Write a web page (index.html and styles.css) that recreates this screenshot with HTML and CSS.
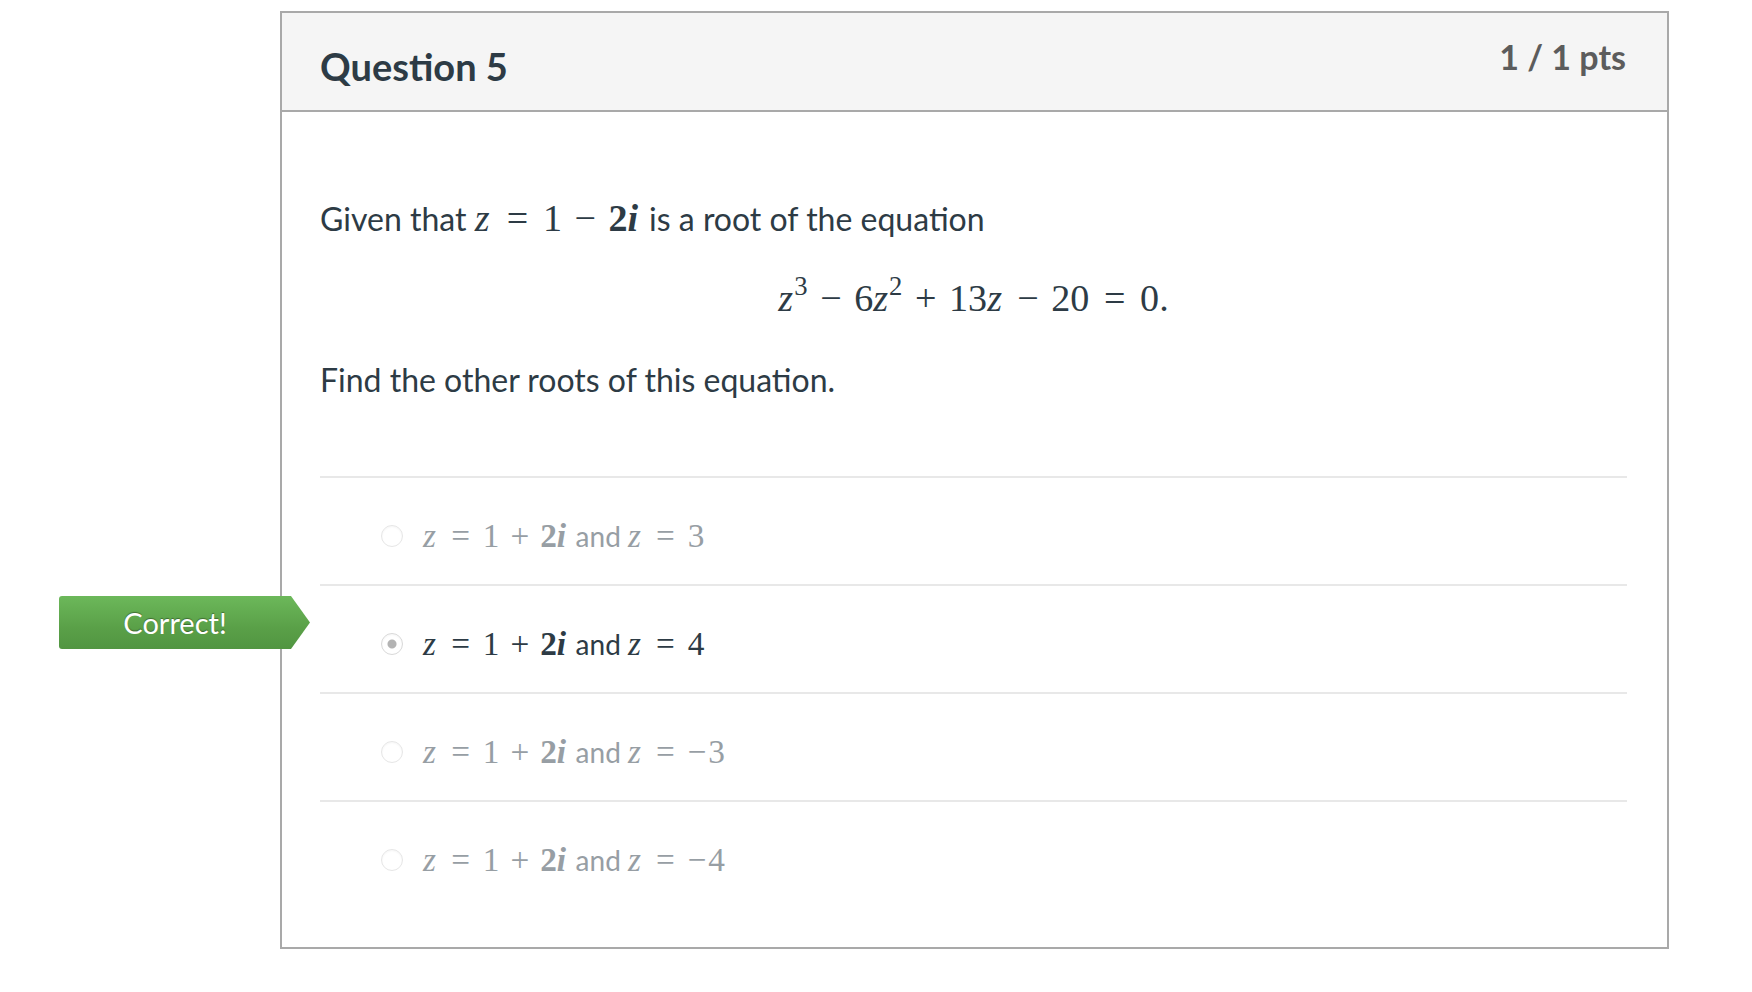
FILE: index.html
```html
<!DOCTYPE html>
<html lang="en">

<head>
    <meta charset="UTF-8">
    <meta name="viewport" content="width=device-width, initial-scale=1.0">
    <title>Question 5</title>
    <link rel="stylesheet" href="styles.css">
</head>

<body>
    <div class="question">
        <!-- Header -->
        <div class="question-header">
            <h2 class="question-title">Question 5</h2>
            <span class="points">1 / 1 pts</span>
        </div>

        <div class="question-body">
            <p class="question-text">Given that <span class="math"><i>z</i><span class="rel">=</span>1<span class="bin">−</span><b>2<i>i</i></b></span> is a root of the equation</p>

            <div class="math-display">
                <span class="math"><i>z</i><sup>3</sup><span class="bin">−</span>6<i>z</i><sup>2</sup><span class="bin">+</span>13<i>z</i><span class="bin">−</span>20<span class="rel">=</span>0.</span>
            </div>

            <p class="question-text">Find the other roots of this equation.</p>

            <!-- Answers -->
            <div class="answers">
                <div class="answer">
                    <span class="radio"></span>
                    <span class="answer-text"><span class="math"><i>z</i><span class="rel">=</span>1<span class="bin">+</span><b>2<i>i</i></b></span> and <span class="math"><i>z</i><span class="rel">=</span>3</span></span>
                </div>
                <div class="answer selected">
                    <span class="correct-flag">Correct!</span>
                    <span class="radio"></span>
                    <span class="answer-text"><span class="math"><i>z</i><span class="rel">=</span>1<span class="bin">+</span><b>2<i>i</i></b></span> and <span class="math"><i>z</i><span class="rel">=</span>4</span></span>
                </div>
                <div class="answer">
                    <span class="radio"></span>
                    <span class="answer-text"><span class="math"><i>z</i><span class="rel">=</span>1<span class="bin">+</span><b>2<i>i</i></b></span> and <span class="math"><i>z</i><span class="rel">=</span><span class="neg">−</span>3</span></span>
                </div>
                <div class="answer">
                    <span class="radio"></span>
                    <span class="answer-text"><span class="math"><i>z</i><span class="rel">=</span>1<span class="bin">+</span><b>2<i>i</i></b></span> and <span class="math"><i>z</i><span class="rel">=</span><span class="neg">−</span>4</span></span>
                </div>
            </div>
        </div>
    </div>
</body>

</html>
```

FILE: styles.css
```css
* {
    box-sizing: border-box;
}

body {
    margin: 0;
    background-color: #fff;
    font-family: Lato, "Open Sans", sans-serif;
    color: #2d3b45;
}

.question {
    width: 1389px;
    margin: 11px 0 0 280px;
    border: 2px solid #a9a9a9;
}

.question-header {
    display: flex;
    justify-content: space-between;
    align-items: flex-start;
    height: 99px;
    padding: 24px 41px 0 38px;
    background-color: #f5f5f5;
    border-bottom: 2px solid #a9a9a9;
}

.question-title {
    margin: 7px 0 0;
    font-size: 38px;
    font-weight: 700;
    line-height: 1.2;
    color: #2d3b45;
}

.points {
    font-size: 34px;
    font-weight: 700;
    line-height: 1.2;
    color: #5c5c5c;
}

.question-body {
    padding: 86px 40px 39px 38px;
}

.question-text {
    margin: 0;
    font-size: 32px;
    line-height: 42px;
}

.math-display {
    margin: 38px 0 39px;
    font-size: 32px;
    line-height: 42px;
    text-align: center;
}

/* math typesetting */
.math {
    font-family: "Liberation Serif", "Times New Roman", serif;
    font-size: 1.19em;
    line-height: 1;
    white-space: nowrap;
}

.math i {
    font-style: italic;
    margin-right: 0.07em;
}

.math b {
    font-weight: 700;
}

.math sup {
    font-size: 0.7em;
    line-height: 0;
    vertical-align: 0.6em;
    margin-left: -0.06em;
}

.math .rel {
    margin: 0 0.385em;
}

.math .bin {
    margin: 0 0.33em;
}

.math .neg {
    margin-right: 0.05em;
}

.answers {
    margin-top: 75px;
}

.answer {
    position: relative;
    display: flex;
    align-items: center;
    height: 108px;
    padding: 9px 0 0 61px;
    border-top: 2px solid #e8e8e8;
    color: #979ea4;
}

.answer.selected {
    color: #2d3b45;
}

.radio {
    width: 22px;
    height: 22px;
    margin-right: 20px;
    border: 1px solid #e6e6e6;
    border-radius: 50%;
    background-color: #fff;
    box-shadow: inset 0 1px 2px rgba(0, 0, 0, 0.04);
    flex-shrink: 0;
}

.answer.selected .radio {
    border-color: #d9d9d9;
    background: radial-gradient(circle, #b3b3b3 0, #b3b3b3 4px, #fff 5px);
}

.answer-text {
    font-size: 28px;
    line-height: 42px;
}

.correct-flag {
    position: absolute;
    top: 10px;
    left: -261px;
    width: 251px;
    height: 53px;
    padding-right: 19px;
    display: flex;
    align-items: center;
    justify-content: center;
    font-size: 29px;
    color: #fff;
    text-shadow: 0 -1px 1px rgba(0, 0, 0, 0.35);
    background: linear-gradient(#6cb85a, #5aa048 60%, #519541);
    clip-path: polygon(0 0, 232px 0, 100% 50%, 232px 100%, 0 100%);
    border-radius: 3px 0 0 3px;
}
```
